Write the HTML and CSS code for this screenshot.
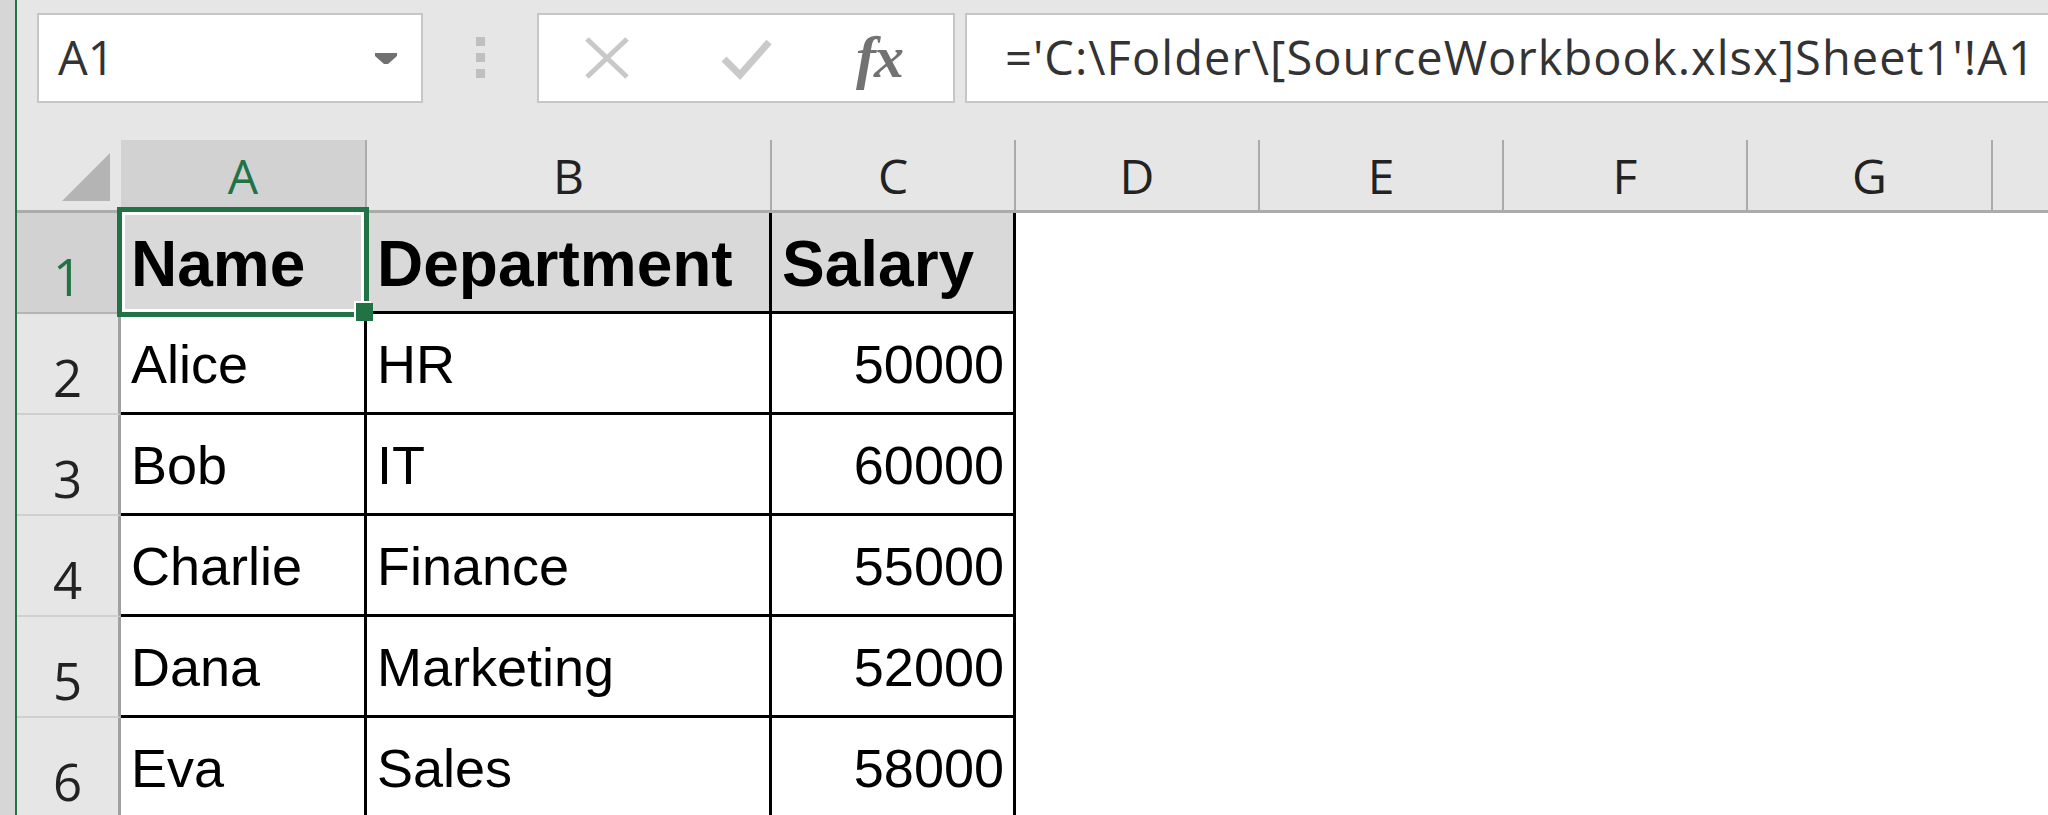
FILE: index.html
```html
<!DOCTYPE html>
<html lang="en">
<head>
<meta charset="utf-8">
<title>Excel - Sheet1</title>
<link rel="stylesheet" href="styles.css">
</head>
<body>
<div class="app">
  <div class="strip"></div>
  <div class="main">
    <div class="fbar">
      <div class="box namebox">
        <span class="ref">A1</span>
        <svg class="dd" width="22" height="11" viewBox="0 0 22 11"><polygon points="0,0 22,0 22,3 13,11 9,11 0,3" fill="#707070"/></svg>
      </div>
      <div class="grip"><i></i><i></i><i></i></div>
      <div class="box btns">
        <svg class="ico-x" width="48" height="44" viewBox="0 0 48 44"><path d="M4 3 L44 41 M44 3 L4 41" stroke="#c8c8c8" stroke-width="5" fill="none"/></svg>
        <svg class="ico-ok" width="52" height="46" viewBox="0 0 52 46"><path d="M4 22 L20 38 L49 5" stroke="#c9c9c9" stroke-width="7" fill="none"/></svg>
        <span class="fx">fx</span>
      </div>
      <div class="box formula">='C:\Folder\[SourceWorkbook.xlsx]Sheet1'!A1</div>
    </div>

    <div class="sheet">
      <div class="srow colhdr">
        <div class="corner"><svg width="48" height="48" viewBox="0 0 48 48"><polygon points="48,0 48,48 0,48" fill="#b4b4b4"/></svg></div>
        <div class="ch sel">A</div>
        <div class="ch">B</div>
        <div class="ch">C</div>
        <div class="ch">D</div>
        <div class="ch">E</div>
        <div class="ch">F</div>
        <div class="ch">G</div>
        <div class="ch last"></div>
      </div>

      <div class="srow r">
        <div class="rh sel">1</div>
        <div class="c hd a1">Name<div class="selbox"></div><div class="handle"></div></div>
        <div class="c hd">Department</div>
        <div class="c hd">Salary</div>
        <div class="e"></div><div class="e"></div><div class="e"></div><div class="e"></div><div class="e"></div>
      </div>
      <div class="srow r">
        <div class="rh">2</div>
        <div class="c">Alice</div>
        <div class="c">HR</div>
        <div class="c num">50000</div>
        <div class="e"></div><div class="e"></div><div class="e"></div><div class="e"></div><div class="e"></div>
      </div>
      <div class="srow r">
        <div class="rh">3</div>
        <div class="c">Bob</div>
        <div class="c">IT</div>
        <div class="c num">60000</div>
        <div class="e"></div><div class="e"></div><div class="e"></div><div class="e"></div><div class="e"></div>
      </div>
      <div class="srow r">
        <div class="rh">4</div>
        <div class="c">Charlie</div>
        <div class="c">Finance</div>
        <div class="c num">55000</div>
        <div class="e"></div><div class="e"></div><div class="e"></div><div class="e"></div><div class="e"></div>
      </div>
      <div class="srow r">
        <div class="rh">5</div>
        <div class="c">Dana</div>
        <div class="c">Marketing</div>
        <div class="c num">52000</div>
        <div class="e"></div><div class="e"></div><div class="e"></div><div class="e"></div><div class="e"></div>
      </div>
      <div class="srow r">
        <div class="rh">6</div>
        <div class="c">Eva</div>
        <div class="c">Sales</div>
        <div class="c num">58000</div>
        <div class="e"></div><div class="e"></div><div class="e"></div><div class="e"></div><div class="e"></div>
      </div>
    </div>
  </div>
</div>
</body>
</html>
```

FILE: styles.css
```css
* { box-sizing: border-box; }

html, body {
  margin: 0;
  padding: 0;
}

body {
  width: 2048px;
  height: 815px;
  overflow: hidden;
  background: #e6e6e6;
  font-family: "Open Sans", "Noto Sans", sans-serif;
}

.app {
  display: flex;
  height: 815px;
}

.strip {
  width: 17px;
  flex: none;
  background: #d6d6d6;
  border-right: 2px solid #217346;
}

.main {
  flex: 1;
  min-width: 0;
  display: flex;
  flex-direction: column;
  overflow: hidden;
  background: #e6e6e6;
}

/* ---------- formula bar ---------- */
.fbar {
  height: 140px;
  flex: none;
  padding-top: 13px;
  display: flex;
  align-items: flex-start;
}

.box {
  height: 90px;
  border: 2px solid #c6c6c6;
  background: #fff;
}

.namebox {
  width: 386px;
  margin-left: 20px;
  display: flex;
  align-items: center;
  padding: 0 24px 0 19px;
}

.namebox .ref {
  align-self: flex-start;
  margin-top: 19px;
  font-size: 47px;
  line-height: 1;
  color: #333;
}

.namebox .dd {
  margin-left: auto;
}

.grip {
  margin-left: 53px;
  margin-top: 24px;
  display: flex;
  flex-direction: column;
  gap: 7px;
}

.grip i {
  display: block;
  width: 9px;
  height: 9px;
  background: #bfbfbf;
}

.btns {
  width: 418px;
  margin-left: 52px;
  display: flex;
  align-items: center;
  padding-left: 44px;
}

.ico-ok {
  margin-left: 89px;
  margin-top: 4px;
}

.fx {
  margin-left: 84px;
  font-family: "Liberation Serif", "DejaVu Serif", serif;
  font-style: italic;
  font-weight: bold;
  font-size: 60px;
  line-height: 1;
  letter-spacing: -2px;
  color: #727272;
  margin-top: -2px;
}

.formula {
  flex: 1;
  margin-left: 10px;
  margin-right: -10px;
  padding: 19px 0 0 38px;
  font-size: 47px;
  letter-spacing: 1.05px;
  line-height: 1;
  color: #333;
  white-space: nowrap;
  overflow: hidden;
}

/* ---------- sheet grid ---------- */
.sheet {
  flex: 1;
  overflow: hidden;
}

.srow {
  display: grid;
  grid-template-columns: 104px 246px 405px 244px 244px 244px 244px 245px 1fr;
}

.colhdr {
  height: 73px;
}

.colhdr > div {
  border-bottom: 3px solid #ababab;
}

.corner {
  display: flex;
  justify-content: flex-end;
  align-items: flex-end;
  padding: 0 11px 9px 0;
}

.ch {
  border-right: 2px solid #ababab;
  display: flex;
  justify-content: center;
  align-items: flex-end;
  padding-bottom: 10px;
  font-size: 48px;
  line-height: 1;
  color: #222;
}

.ch.last {
  border-right: none;
}

.ch.sel {
  background: #d2d2d2;
  color: #217346;
}

.r {
  height: 101px;
}

.rh {
  border-right: 3px solid #a0a0a0;
  border-bottom: 2px solid #cfcfcf;
  background: #e6e6e6;
  display: flex;
  justify-content: center;
  align-items: flex-end;
  padding-bottom: 10px;
  font-size: 51px;
  line-height: 1;
  color: #222;
}

.rh.sel {
  background: #d2d2d2;
  color: #217346;
  border-bottom-color: #b4b4b4;
}

.c {
  border-right: 3px solid #000;
  border-bottom: 3px solid #000;
  background: #fff;
  display: flex;
  align-items: flex-end;
  padding: 0 9px 21px 10px;
  font-family: "Liberation Sans", Arial, sans-serif;
  font-size: 54px;
  line-height: 1;
  color: #000;
  white-space: nowrap;
}

.c.hd {
  background: #d9d9d9;
  font-weight: bold;
  font-size: 64px;
  padding-bottom: 15px;
}

.c.num {
  justify-content: flex-end;
}

.e {
  background: #fff;
}

/* ---------- active cell selection ---------- */
.a1 {
  position: relative;
}

.selbox {
  position: absolute;
  left: -4px;
  top: -6px;
  width: 252px;
  height: 110px;
  border: 5px solid #217346;
  box-shadow: inset 0 0 0 3px #fff;
}

.handle {
  position: absolute;
  left: 235px;
  top: 90px;
  width: 17px;
  height: 18px;
  background: #217346;
  box-shadow: -2px -2px 0 0 #fff;
}
```
